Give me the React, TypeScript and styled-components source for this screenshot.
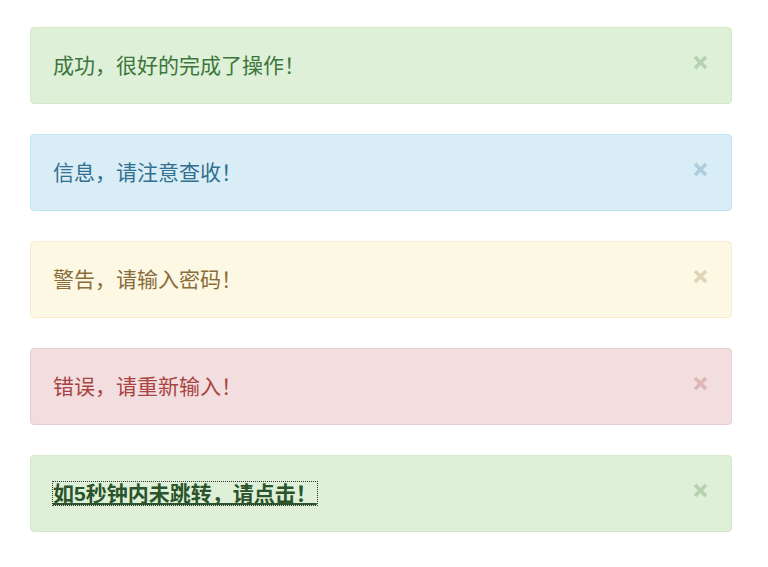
import React from 'react'
import styled, { createGlobalStyle } from 'styled-components'

type Kind = 'success' | 'info' | 'warning' | 'danger'

const PALETTE: Record<Kind, { bg: string; border: string; text: string }> = {
  success: { bg: '#dff0d8', border: '#d6e9c6', text: '#3c763d' },
  info: { bg: '#d9edf7', border: '#bce8f1', text: '#31708f' },
  warning: { bg: '#fcf8e3', border: '#faebcc', text: '#8a6d3b' },
  danger: { bg: '#f2dede', border: '#ebccd1', text: '#a94442' },
}

const GlobalStyle = createGlobalStyle`
  body {
    margin: 0;
    background: #fff;
    font-family: "Liberation Sans", "Noto Sans CJK SC", sans-serif;
  }
`

const Page = styled.div`
  width: 702px;
  padding: 27px 0 0 30px;
  display: flex;
  flex-direction: column;
  gap: 30px;
`

const Alert = styled.div<{ $kind: Kind }>`
  display: flex;
  align-items: flex-start;
  justify-content: space-between;
  padding: 23px 23px 23px 22px;
  border: 1px solid ${(p) => PALETTE[p.$kind].border};
  border-radius: 4px;
  background: ${(p) => PALETTE[p.$kind].bg};
  color: ${(p) => PALETTE[p.$kind].text};
  font-size: 21px;
  line-height: 29px;
`

const Message = styled.span``

const AlertLink = styled.a`
  color: #2b542c;
  font-weight: bold;
  text-decoration: underline;
  outline: 1px dotted #333;
  outline-offset: 0;
`

const Close = styled.button`
  margin: 4px 0 0 0;
  padding: 0;
  border: 0;
  background: transparent;
  color: inherit;
  opacity: 0.25;
  width: 15px;
  height: 15px;
  cursor: pointer;
  display: flex;

  svg {
    display: block;
  }
`

function CloseIcon() {
  return (
    <svg width="15" height="15" viewBox="0 0 15 15">
      <path d="M2 2 L13 13 M13 2 L2 13" stroke="currentColor" strokeWidth="3.6" strokeLinecap="butt" />
    </svg>
  )
}

const ALERTS: { kind: Kind; text: string }[] = [
  { kind: 'success', text: '成功，很好的完成了操作！' },
  { kind: 'info', text: '信息，请注意查收！' },
  { kind: 'warning', text: '警告，请输入密码！' },
  { kind: 'danger', text: '错误，请重新输入！' },
]

export default function App() {
  return (
    <>
      <GlobalStyle />
      <Page>
        {ALERTS.map((a) => (
          <Alert key={a.kind} $kind={a.kind}>
            <Message>{a.text}</Message>
            <Close aria-label="close">
              <CloseIcon />
            </Close>
          </Alert>
        ))}
        <Alert $kind="success">
          <Message>
            <AlertLink href="#">如5秒钟内未跳转，请点击！</AlertLink>
          </Message>
          <Close aria-label="close">
            <CloseIcon />
          </Close>
        </Alert>
      </Page>
    </>
  )
}
